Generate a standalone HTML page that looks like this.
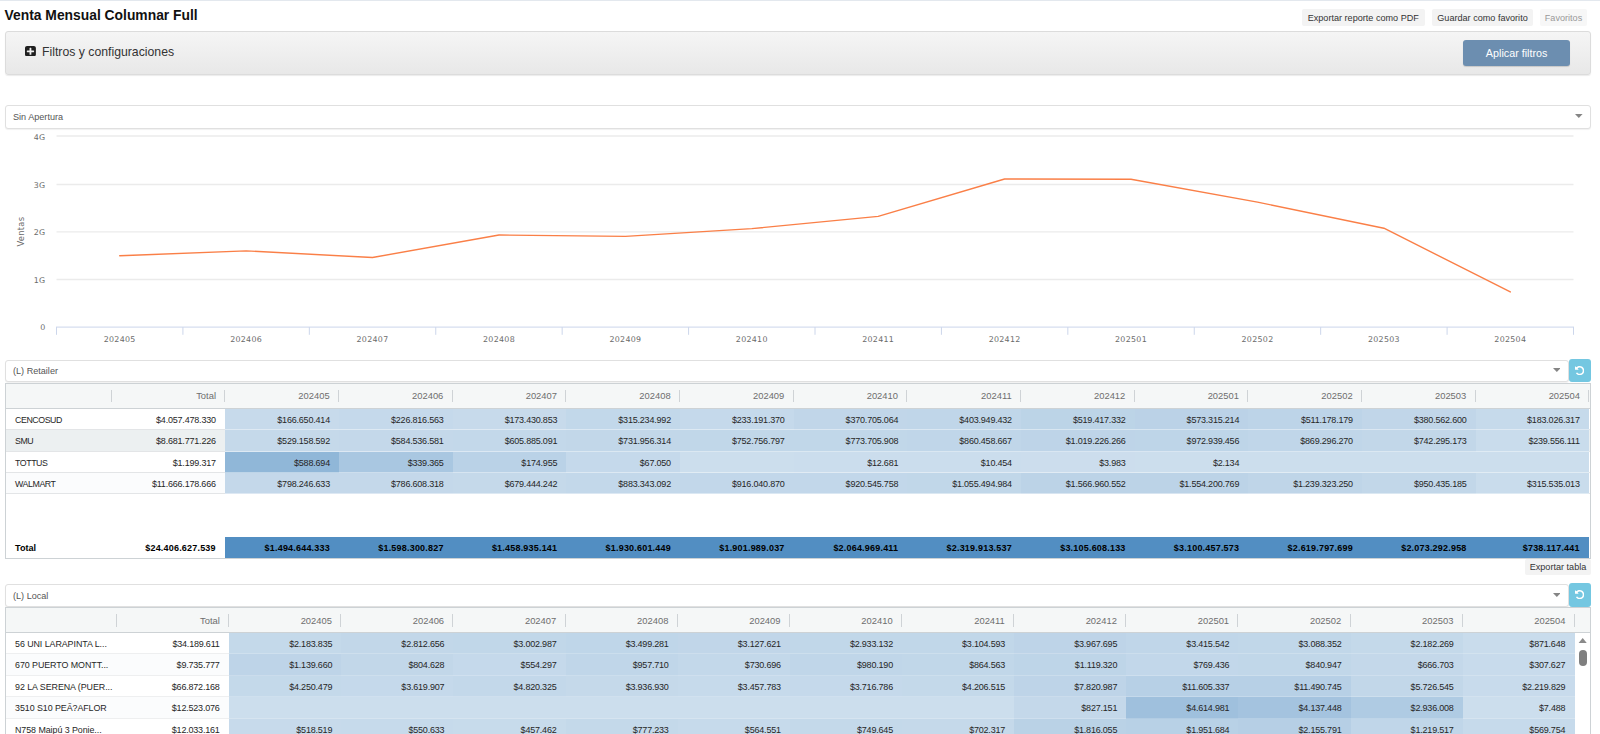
<!DOCTYPE html>
<html lang="es"><head><meta charset="utf-8"><title>Venta Mensual Columnar Full</title>
<style>
html,body{margin:0;padding:0;background:#fff;}
body{width:1600px;height:734px;overflow:hidden;position:relative;font-family:"Liberation Sans",sans-serif;color:#333;}
#topline{position:absolute;left:0;top:0;width:1600px;height:1px;background:#e3e8ee;}
#title{position:absolute;left:4.6px;top:7.2px;font-size:13.85px;font-weight:bold;color:#111;line-height:16px;white-space:nowrap;}
.btn{position:absolute;top:9.4px;height:16.8px;line-height:16.8px;font-size:9.1px;color:#333;background:#f3f3f3;border-radius:2px;text-align:center;white-space:nowrap;}
.btn.dis{color:#999;background:#f7f7f7;}
#b1{left:1302px;width:122.5px;}
#b2{left:1432px;width:101px;}
#b3{left:1540px;width:47px;}
#b4{left:1525px;width:66px;top:559.3px;height:16px;line-height:15.6px;}
#panel{position:absolute;left:4.6px;top:31px;width:1584.6px;height:42px;border:1px solid #dcdcdc;border-radius:3px;background:linear-gradient(#f5f5f5,#e8e8e8);box-shadow:0 1px 1px rgba(0,0,0,.08);}
#plus{position:absolute;left:19.3px;top:13.6px;}
#ftxt{position:absolute;left:36.4px;top:12px;font-size:12.25px;line-height:16px;color:#333;white-space:nowrap;}
#apply{position:absolute;left:1457.4px;top:8px;width:107.3px;height:26px;line-height:26.5px;background:#6c8eb0;border-radius:3px;color:#fff;font-size:10.75px;text-align:center;box-shadow:0 1px 1px rgba(0,0,0,.15);}
.sel{position:absolute;height:21.5px;border:1px solid #e0e0e0;border-radius:3px;background:#fff;box-sizing:border-box;box-shadow:0 1px 1px rgba(0,0,0,.06);}
#s0{height:23.5px;}
.sel span{position:absolute;left:7px;top:0;bottom:0;font-size:9.1px;line-height:21.6px;color:#555;white-space:nowrap;}
#s0 span{line-height:23px;}
.sel .car{position:absolute;right:7.3px;top:50%;margin-top:-2.7px;}
.rbtn{position:absolute;left:1568.5px;width:22.5px;height:23px;border-radius:3px;background:#74c7e1;}
.rbtn svg{position:absolute;left:6.2px;top:6.5px;}
.ct{font-family:"DejaVu Sans","Liberation Sans",sans-serif;font-size:7.9px;letter-spacing:.3px;fill:#6a6a6a;}
.grid{position:absolute;border:1px solid #cdd2d5;box-sizing:border-box;background:#fff;overflow:hidden;font-size:9px;color:#262626;}
.ghdr{position:absolute;left:0;top:0;right:0;background:#f5f7f7;border-bottom:1px solid #cdd2d5;box-sizing:border-box;}
.hc{position:absolute;top:0;bottom:0;box-sizing:border-box;padding-right:9px;text-align:right;color:#6e6e6e;}
.hc span{position:absolute;right:9.3px;top:50%;margin-top:-6px;line-height:12px;}
.hc i{position:absolute;right:0;top:6.5px;bottom:6px;width:1px;background:#cfd3d6;}
.row{position:absolute;left:0;right:0;box-sizing:border-box;border-bottom:1px solid #e3e5e7;background:#fff;}
.row.odd{background:#fbfcfd;}
.row.hov{background:#ecf0f1;}
.c{position:absolute;top:0;bottom:0;box-sizing:border-box;padding:0 9.5px 0 9px;text-align:right;white-space:nowrap;overflow:hidden;display:flex;align-items:center;justify-content:flex-end;}
.row .c{border-bottom:0;}
.c.l{justify-content:flex-start;text-align:left;}
.row.tot{border-bottom:0;font-weight:bold;color:#000;}
.sb{position:absolute;right:0;top:24.8px;bottom:0;width:15px;background:#fff;}
.sbu{position:absolute;left:3px;top:4.4px;}
.sbt{position:absolute;left:3.6px;top:17px;width:8px;height:16px;border-radius:4px;background:#7f7f7f;}

#s2{height:22.3px;}
#s2 span{line-height:22.4px;}
.hc span{font-size:9.4px;margin-top:-5.5px;}
.c{letter-spacing:-0.2px;padding-top:1.4px;}
.c.l{letter-spacing:-0.42px;font-size:8.8px;}
.row.tot .c{letter-spacing:0.2px;}
.row.tot .c.l{letter-spacing:0;font-size:9.1px;}
#g2 .c.l{letter-spacing:-0.06px;font-size:8.9px;}
#g2 .hc i{top:5.8px;bottom:5.4px;}
.ct.v{font-size:8.4px;letter-spacing:.25px;}
#g2 .row{border-bottom-color:#eeeff0;}
.c.h{bottom:-1px;box-shadow:inset 0 -1px 0 rgba(255,255,255,.42);}
#g2 .c.h{box-shadow:inset 0 -1px 0 rgba(255,255,255,.2);}
.row.tot .c.h{bottom:0;box-shadow:none;}
.btn{line-height:18.4px;}
#b4{line-height:16.6px;}
.c.h{padding-top:0.4px;}
.row.tot .c.h,.row.tot .c{padding-top:0.3px;}

</style></head><body>
<div id="topline"></div>
<div id="title">Venta Mensual Columnar Full</div>
<div class="btn" id="b1">Exportar reporte como PDF</div>
<div class="btn" id="b2">Guardar como favorito</div>
<div class="btn dis" id="b3">Favoritos</div>
<div id="panel">
  <svg id="plus" width="10.9" height="10.6" preserveAspectRatio="none" viewBox="0 -1408 1536 1536"><path transform="scale(1,-1)" fill="#1f1f1f" d="M1280 576C1280 541 1251 512 1216 512H896V192C896 157 867 128 832 128H704C669 128 640 157 640 192V512H320C285 512 256 541 256 576V704C256 739 285 768 320 768H640V1088C640 1123 669 1152 704 1152H832C867 1152 896 1123 896 1088V768H1216C1251 768 1280 739 1280 704V576ZM1536 1120C1536 1279 1407 1408 1248 1408H288C129 1408 0 1279 0 1120V160C0 1 129 -128 288 -128H1248C1407 -128 1536 1 1536 160Z"/></svg>
  <span id="ftxt">Filtros y configuraciones</span>
  <div id="apply">Aplicar filtros</div>
</div>
<div class="sel" id="s0" style="left:5px;top:105px;width:1586px"><span>Sin Apertura</span><svg class="car" width="7.6" height="4" viewBox="0 0 7.6 4"><path d="M0 0 H7.6 L3.8 4 Z" fill="#858585"/></svg></div>
<svg id="chart" width="1600" height="230" viewBox="0 130 1600 230" style="position:absolute;left:0;top:130px">
<line x1="56.5" x2="1573.5" y1="279.50" y2="279.50" stroke="#ebebeb" stroke-width="1.4"/>
<line x1="56.5" x2="1573.5" y1="231.90" y2="231.90" stroke="#ebebeb" stroke-width="1.4"/>
<line x1="56.5" x2="1573.5" y1="184.45" y2="184.45" stroke="#ebebeb" stroke-width="1.4"/>
<line x1="56.5" x2="1573.5" y1="136.00" y2="136.00" stroke="#ebebeb" stroke-width="1.4"/>
<line x1="56.0" x2="1574.0" y1="327.1" y2="327.1" stroke="#ccd6eb" stroke-width="1"/>
<line x1="56.50" x2="56.50" y1="327.1" y2="334.8" stroke="#ccd6eb" stroke-width="1"/>
<line x1="182.92" x2="182.92" y1="327.1" y2="334.8" stroke="#ccd6eb" stroke-width="1"/>
<line x1="309.33" x2="309.33" y1="327.1" y2="334.8" stroke="#ccd6eb" stroke-width="1"/>
<line x1="435.75" x2="435.75" y1="327.1" y2="334.8" stroke="#ccd6eb" stroke-width="1"/>
<line x1="562.17" x2="562.17" y1="327.1" y2="334.8" stroke="#ccd6eb" stroke-width="1"/>
<line x1="688.58" x2="688.58" y1="327.1" y2="334.8" stroke="#ccd6eb" stroke-width="1"/>
<line x1="815.00" x2="815.00" y1="327.1" y2="334.8" stroke="#ccd6eb" stroke-width="1"/>
<line x1="941.42" x2="941.42" y1="327.1" y2="334.8" stroke="#ccd6eb" stroke-width="1"/>
<line x1="1067.83" x2="1067.83" y1="327.1" y2="334.8" stroke="#ccd6eb" stroke-width="1"/>
<line x1="1194.25" x2="1194.25" y1="327.1" y2="334.8" stroke="#ccd6eb" stroke-width="1"/>
<line x1="1320.67" x2="1320.67" y1="327.1" y2="334.8" stroke="#ccd6eb" stroke-width="1"/>
<line x1="1447.08" x2="1447.08" y1="327.1" y2="334.8" stroke="#ccd6eb" stroke-width="1"/>
<line x1="1573.50" x2="1573.50" y1="327.1" y2="334.8" stroke="#ccd6eb" stroke-width="1"/>
<text class="ct" x="45.5" y="330.40" text-anchor="end">0</text>
<text class="ct" x="45.5" y="282.80" text-anchor="end">1G</text>
<text class="ct" x="45.5" y="235.20" text-anchor="end">2G</text>
<text class="ct" x="45.5" y="187.75" text-anchor="end">3G</text>
<text class="ct" x="45.5" y="140.05" text-anchor="end">4G</text>
<text class="ct" x="119.7" y="341.9" text-anchor="middle">202405</text>
<text class="ct" x="246.1" y="341.9" text-anchor="middle">202406</text>
<text class="ct" x="372.5" y="341.9" text-anchor="middle">202407</text>
<text class="ct" x="499.0" y="341.9" text-anchor="middle">202408</text>
<text class="ct" x="625.4" y="341.9" text-anchor="middle">202409</text>
<text class="ct" x="751.8" y="341.9" text-anchor="middle">202410</text>
<text class="ct" x="878.2" y="341.9" text-anchor="middle">202411</text>
<text class="ct" x="1004.6" y="341.9" text-anchor="middle">202412</text>
<text class="ct" x="1131.0" y="341.9" text-anchor="middle">202501</text>
<text class="ct" x="1257.5" y="341.9" text-anchor="middle">202502</text>
<text class="ct" x="1383.9" y="341.9" text-anchor="middle">202503</text>
<text class="ct" x="1510.3" y="341.9" text-anchor="middle">202504</text>
<text class="ct v" transform="translate(24.2,231.6) rotate(-90)" text-anchor="middle">Ventas</text>
<polyline points="119.7,255.8 246.1,250.9 372.5,257.5 499.0,235.0 625.4,236.4 751.8,228.6 878.2,216.4 1004.6,179.0 1131.0,179.2 1257.5,202.1 1383.9,228.2 1510.3,291.9" fill="none" stroke="#fa7f47" stroke-width="1.4" stroke-linejoin="round" stroke-linecap="round"/>
</svg>
<div class="sel" id="s1" style="left:5px;top:360px;width:1563.5px"><span>(L) Retailer</span><svg class="car" width="7.6" height="4" viewBox="0 0 7.6 4"><path d="M0 0 H7.6 L3.8 4 Z" fill="#858585"/></svg></div>
<div class="rbtn" style="top:359px"><svg width="9.3" height="9.3" viewBox="0 -1408 1536 1536"><path transform="scale(1,-1)" fill="#fff" d="M1536 640C1536 1063 1191 1408 768 1408C571 1408 380 1329 239 1196L109 1325C91 1344 63 1349 40 1339C16 1329 0 1306 0 1280V832C0 797 29 768 64 768H512C538 768 561 784 571 808C581 831 576 859 557 877L420 1015C513 1102 637 1152 768 1152C1050 1152 1280 922 1280 640C1280 358 1050 128 768 128C609 128 462 200 364 327C359 334 350 338 341 339C332 339 323 336 316 330L179 192C168 181 167 162 177 149C323 -27 539 -128 768 -128C1191 -128 1536 217 1536 640Z"/></svg></div>
<div class="grid" id="g1" style="left:5px;top:382.7px;width:1586px;height:176.3px">
<div class="ghdr" style="height:25.3px">
<div class="hc" style="left:0.00px;width:105.65px"><span></span><i></i></div>
<div class="hc" style="left:105.65px;width:113.66px"><span>Total</span><i></i></div>
<div class="hc" style="left:219.31px;width:113.66px"><span>202405</span><i></i></div>
<div class="hc" style="left:332.97px;width:113.66px"><span>202406</span><i></i></div>
<div class="hc" style="left:446.63px;width:113.66px"><span>202407</span><i></i></div>
<div class="hc" style="left:560.29px;width:113.66px"><span>202408</span><i></i></div>
<div class="hc" style="left:673.95px;width:113.66px"><span>202409</span><i></i></div>
<div class="hc" style="left:787.61px;width:113.66px"><span>202410</span><i></i></div>
<div class="hc" style="left:901.27px;width:113.66px"><span>202411</span><i></i></div>
<div class="hc" style="left:1014.93px;width:113.66px"><span>202412</span><i></i></div>
<div class="hc" style="left:1128.59px;width:113.66px"><span>202501</span><i></i></div>
<div class="hc" style="left:1242.25px;width:113.66px"><span>202502</span><i></i></div>
<div class="hc" style="left:1355.91px;width:113.66px"><span>202503</span><i></i></div>
<div class="hc" style="left:1469.57px;width:113.66px"><span>202504</span><i></i></div>
</div>
<div class="row" style="top:25.30px;height:21.33px">
<div class="c l" style="left:0;width:105.65px">CENCOSUD</div>
<div class="c" style="left:105.65px;width:113.66px">$4.057.478.330</div>
<div class="c h" style="left:219.31px;width:114.16px;background:#c7daeb">$166.650.414</div>
<div class="c h" style="left:332.97px;width:114.16px;background:#c5d9eb">$226.816.563</div>
<div class="c h" style="left:446.63px;width:114.16px;background:#c7daeb">$173.430.853</div>
<div class="c h" style="left:560.29px;width:114.16px;background:#c2d8ea">$315.234.992</div>
<div class="c h" style="left:673.95px;width:114.16px;background:#c5d9eb">$233.191.370</div>
<div class="c h" style="left:787.61px;width:114.16px;background:#c1d6e9">$370.705.064</div>
<div class="c h" style="left:901.27px;width:114.16px;background:#c0d6e9">$403.949.432</div>
<div class="c h" style="left:1014.93px;width:114.16px;background:#bcd4e7">$519.417.332</div>
<div class="c h" style="left:1128.59px;width:114.16px;background:#bbd2e7">$573.315.214</div>
<div class="c h" style="left:1242.25px;width:114.16px;background:#bdd4e8">$511.178.179</div>
<div class="c h" style="left:1355.91px;width:114.16px;background:#c1d6e9">$380.562.600</div>
<div class="c h" style="left:1469.57px;width:113.66px;background:#c6daeb">$183.026.317</div>
</div>
<div class="row odd hov" style="top:46.63px;height:21.33px">
<div class="c l" style="left:0;width:105.65px">SMU</div>
<div class="c" style="left:105.65px;width:113.66px">$8.681.771.226</div>
<div class="c h" style="left:219.31px;width:114.16px;background:#c5d9ea">$529.158.592</div>
<div class="c h" style="left:332.97px;width:114.16px;background:#c4d8ea">$584.536.581</div>
<div class="c h" style="left:446.63px;width:114.16px;background:#c3d8ea">$605.885.091</div>
<div class="c h" style="left:560.29px;width:114.16px;background:#c2d7e9">$731.956.314</div>
<div class="c h" style="left:673.95px;width:114.16px;background:#c1d7e9">$752.756.797</div>
<div class="c h" style="left:787.61px;width:114.16px;background:#c1d7e9">$773.705.908</div>
<div class="c h" style="left:901.27px;width:114.16px;background:#c0d6e9">$860.458.667</div>
<div class="c h" style="left:1014.93px;width:114.16px;background:#bed4e8">$1.019.226.266</div>
<div class="c h" style="left:1128.59px;width:114.16px;background:#bed5e8">$972.939.456</div>
<div class="c h" style="left:1242.25px;width:114.16px;background:#c0d6e9">$869.296.270</div>
<div class="c h" style="left:1355.91px;width:114.16px;background:#c2d7e9">$742.295.173</div>
<div class="c h" style="left:1469.57px;width:113.66px;background:#c9dcec">$239.556.111</div>
</div>
<div class="row" style="top:67.96px;height:21.33px">
<div class="c l" style="left:0;width:105.65px">TOTTUS</div>
<div class="c" style="left:105.65px;width:113.66px">$1.199.317</div>
<div class="c h" style="left:219.31px;width:114.16px;background:#90b7d8">$588.694</div>
<div class="c h" style="left:332.97px;width:114.16px;background:#a9c7e1">$339.365</div>
<div class="c h" style="left:446.63px;width:114.16px;background:#bad2e7">$174.955</div>
<div class="c h" style="left:560.29px;width:114.16px;background:#c5d9eb">$67.050</div>
<div class="c h" style="left:673.95px;width:114.16px;background:#ccdeed"></div>
<div class="c h" style="left:787.61px;width:114.16px;background:#cbdded">$12.681</div>
<div class="c h" style="left:901.27px;width:114.16px;background:#cbdded">$10.454</div>
<div class="c h" style="left:1014.93px;width:114.16px;background:#ccdded">$3.983</div>
<div class="c h" style="left:1128.59px;width:114.16px;background:#ccdeed">$2.134</div>
<div class="c h" style="left:1242.25px;width:114.16px;background:#ccdeed"></div>
<div class="c h" style="left:1355.91px;width:114.16px;background:#ccdeed"></div>
<div class="c h" style="left:1469.57px;width:113.66px;background:#ccdeed"></div>
</div>
<div class="row odd" style="top:89.29px;height:21.33px">
<div class="c l" style="left:0;width:105.65px">WALMART</div>
<div class="c" style="left:105.65px;width:113.66px">$11.666.178.666</div>
<div class="c h" style="left:219.31px;width:114.16px;background:#c4d8ea">$798.246.633</div>
<div class="c h" style="left:332.97px;width:114.16px;background:#c4d8ea">$786.608.318</div>
<div class="c h" style="left:446.63px;width:114.16px;background:#c5d9ea">$679.444.242</div>
<div class="c h" style="left:560.29px;width:114.16px;background:#c3d8ea">$883.343.092</div>
<div class="c h" style="left:673.95px;width:114.16px;background:#c2d7ea">$916.040.870</div>
<div class="c h" style="left:787.61px;width:114.16px;background:#c2d7ea">$920.545.758</div>
<div class="c h" style="left:901.27px;width:114.16px;background:#c1d7e9">$1.055.494.984</div>
<div class="c h" style="left:1014.93px;width:114.16px;background:#bcd3e7">$1.566.960.552</div>
<div class="c h" style="left:1128.59px;width:114.16px;background:#bcd3e7">$1.554.200.769</div>
<div class="c h" style="left:1242.25px;width:114.16px;background:#bfd5e8">$1.239.323.250</div>
<div class="c h" style="left:1355.91px;width:114.16px;background:#c2d7e9">$950.435.185</div>
<div class="c h" style="left:1469.57px;width:113.66px;background:#c9dcec">$315.535.013</div>
</div>
<div class="row tot" style="top:153.40px;height:21.6px">
<div class="c l" style="left:0;width:105.65px">Total</div>
<div class="c" style="left:105.65px;width:113.66px">$24.406.627.539</div>
<div class="c h" style="left:219.31px;width:114.16px;background:#528ec2">$1.494.644.333</div>
<div class="c h" style="left:332.97px;width:114.16px;background:#528ec2">$1.598.300.827</div>
<div class="c h" style="left:446.63px;width:114.16px;background:#528ec2">$1.458.935.141</div>
<div class="c h" style="left:560.29px;width:114.16px;background:#528ec2">$1.930.601.449</div>
<div class="c h" style="left:673.95px;width:114.16px;background:#528ec2">$1.901.989.037</div>
<div class="c h" style="left:787.61px;width:114.16px;background:#528ec2">$2.064.969.411</div>
<div class="c h" style="left:901.27px;width:114.16px;background:#528ec2">$2.319.913.537</div>
<div class="c h" style="left:1014.93px;width:114.16px;background:#528ec2">$3.105.608.133</div>
<div class="c h" style="left:1128.59px;width:114.16px;background:#528ec2">$3.100.457.573</div>
<div class="c h" style="left:1242.25px;width:114.16px;background:#528ec2">$2.619.797.699</div>
<div class="c h" style="left:1355.91px;width:114.16px;background:#528ec2">$2.073.292.958</div>
<div class="c h" style="left:1469.57px;width:113.66px;background:#528ec2">$738.117.441</div>
</div>
</div>
<div class="btn" id="b4">Exportar tabla</div>
<div class="sel" id="s2" style="left:5px;top:584.3px;width:1563.5px"><span>(L) Local</span><svg class="car" width="7.6" height="4" viewBox="0 0 7.6 4"><path d="M0 0 H7.6 L3.8 4 Z" fill="#858585"/></svg></div>
<div class="rbtn" style="top:583.3px;height:23.4px"><svg width="9.3" height="9.3" viewBox="0 -1408 1536 1536"><path transform="scale(1,-1)" fill="#fff" d="M1536 640C1536 1063 1191 1408 768 1408C571 1408 380 1329 239 1196L109 1325C91 1344 63 1349 40 1339C16 1329 0 1306 0 1280V832C0 797 29 768 64 768H512C538 768 561 784 571 808C581 831 576 859 557 877L420 1015C513 1102 637 1152 768 1152C1050 1152 1280 922 1280 640C1280 358 1050 128 768 128C609 128 462 200 364 327C359 334 350 338 341 339C332 339 323 336 316 330L179 192C168 181 167 162 177 149C323 -27 539 -128 768 -128C1191 -128 1536 217 1536 640Z"/></svg></div>
<div class="grid" id="g2" style="left:5px;top:607.4px;width:1586px;height:140px">
<div class="ghdr" style="height:24.6px">
<div class="hc" style="left:0.00px;width:111.00px"><span></span><i></i></div>
<div class="hc" style="left:111.00px;width:112.14px"><span>Total</span><i></i></div>
<div class="hc" style="left:223.14px;width:112.14px"><span>202405</span><i></i></div>
<div class="hc" style="left:335.28px;width:112.14px"><span>202406</span><i></i></div>
<div class="hc" style="left:447.42px;width:112.14px"><span>202407</span><i></i></div>
<div class="hc" style="left:559.56px;width:112.14px"><span>202408</span><i></i></div>
<div class="hc" style="left:671.70px;width:112.14px"><span>202409</span><i></i></div>
<div class="hc" style="left:783.84px;width:112.14px"><span>202410</span><i></i></div>
<div class="hc" style="left:895.98px;width:112.14px"><span>202411</span><i></i></div>
<div class="hc" style="left:1008.12px;width:112.14px"><span>202412</span><i></i></div>
<div class="hc" style="left:1120.26px;width:112.14px"><span>202501</span><i></i></div>
<div class="hc" style="left:1232.40px;width:112.14px"><span>202502</span><i></i></div>
<div class="hc" style="left:1344.54px;width:112.14px"><span>202503</span><i></i></div>
<div class="hc" style="left:1456.68px;width:112.14px"><span>202504</span><i></i></div>
</div>
<div class="row" style="top:24.60px;height:21.45px">
<div class="c l" style="left:0;width:111px">56 UNI LARAPINTA L...</div>
<div class="c" style="left:111.00px;width:112.14px">$34.189.611</div>
<div class="c h" style="left:223.14px;width:112.64px;background:#c4d9ea">$2.183.835</div>
<div class="c h" style="left:335.28px;width:112.64px;background:#c2d7e9">$2.812.656</div>
<div class="c h" style="left:447.42px;width:112.64px;background:#c1d7e9">$3.002.987</div>
<div class="c h" style="left:559.56px;width:112.64px;background:#bfd6e9">$3.499.281</div>
<div class="c h" style="left:671.70px;width:112.64px;background:#c1d6e9">$3.127.621</div>
<div class="c h" style="left:783.84px;width:112.64px;background:#c1d7e9">$2.933.132</div>
<div class="c h" style="left:895.98px;width:112.64px;background:#c1d7e9">$3.104.593</div>
<div class="c h" style="left:1008.12px;width:112.64px;background:#bed4e8">$3.967.695</div>
<div class="c h" style="left:1120.26px;width:112.64px;background:#c0d6e9">$3.415.542</div>
<div class="c h" style="left:1232.40px;width:112.64px;background:#c1d7e9">$3.088.352</div>
<div class="c h" style="left:1344.54px;width:112.64px;background:#c4d9ea">$2.182.269</div>
<div class="c h" style="left:1456.68px;width:112.14px;background:#c9dcec">$871.648</div>
</div>
<div class="row odd" style="top:46.05px;height:21.45px">
<div class="c l" style="left:0;width:111px">670 PUERTO MONTT...</div>
<div class="c" style="left:111.00px;width:112.14px">$9.735.777</div>
<div class="c h" style="left:223.14px;width:112.64px;background:#bed4e8">$1.139.660</div>
<div class="c h" style="left:335.28px;width:112.64px;background:#c2d7e9">$804.628</div>
<div class="c h" style="left:447.42px;width:112.64px;background:#c5d9eb">$554.297</div>
<div class="c h" style="left:559.56px;width:112.64px;background:#c0d6e9">$957.710</div>
<div class="c h" style="left:671.70px;width:112.64px;background:#c3d8ea">$730.696</div>
<div class="c h" style="left:783.84px;width:112.64px;background:#c0d6e9">$980.190</div>
<div class="c h" style="left:895.98px;width:112.64px;background:#c1d7e9">$864.563</div>
<div class="c h" style="left:1008.12px;width:112.64px;background:#bed5e8">$1.119.320</div>
<div class="c h" style="left:1120.26px;width:112.64px;background:#c2d7ea">$769.436</div>
<div class="c h" style="left:1232.40px;width:112.64px;background:#c1d7e9">$840.947</div>
<div class="c h" style="left:1344.54px;width:112.64px;background:#c4d8ea">$666.703</div>
<div class="c h" style="left:1456.68px;width:112.14px;background:#c8dbec">$307.627</div>
</div>
<div class="row" style="top:67.50px;height:21.45px">
<div class="c l" style="left:0;width:111px">92 LA SERENA (PUER...</div>
<div class="c" style="left:111.00px;width:112.14px">$66.872.168</div>
<div class="c h" style="left:223.14px;width:112.64px;background:#c4d9ea">$4.250.479</div>
<div class="c h" style="left:335.28px;width:112.64px;background:#c5d9eb">$3.619.907</div>
<div class="c h" style="left:447.42px;width:112.64px;background:#c3d8ea">$4.820.325</div>
<div class="c h" style="left:559.56px;width:112.64px;background:#c5d9ea">$3.936.930</div>
<div class="c h" style="left:671.70px;width:112.64px;background:#c6daeb">$3.457.783</div>
<div class="c h" style="left:783.84px;width:112.64px;background:#c5d9eb">$3.716.786</div>
<div class="c h" style="left:895.98px;width:112.64px;background:#c4d9ea">$4.206.515</div>
<div class="c h" style="left:1008.12px;width:112.64px;background:#bed4e8">$7.820.987</div>
<div class="c h" style="left:1120.26px;width:112.64px;background:#b7d0e6">$11.605.337</div>
<div class="c h" style="left:1232.40px;width:112.64px;background:#b7d0e6">$11.490.745</div>
<div class="c h" style="left:1344.54px;width:112.64px;background:#c2d7e9">$5.726.545</div>
<div class="c h" style="left:1456.68px;width:112.14px;background:#c8dbec">$2.219.829</div>
</div>
<div class="row odd" style="top:88.95px;height:21.45px">
<div class="c l" style="left:0;width:111px">3510 S10 PEÃ?AFLOR</div>
<div class="c" style="left:111.00px;width:112.14px">$12.523.076</div>
<div class="c h" style="left:223.14px;width:112.64px;background:#ccdeed"></div>
<div class="c h" style="left:335.28px;width:112.64px;background:#ccdeed"></div>
<div class="c h" style="left:447.42px;width:112.64px;background:#ccdeed"></div>
<div class="c h" style="left:559.56px;width:112.64px;background:#ccdeed"></div>
<div class="c h" style="left:671.70px;width:112.64px;background:#ccdeed"></div>
<div class="c h" style="left:783.84px;width:112.64px;background:#ccdeed"></div>
<div class="c h" style="left:895.98px;width:112.64px;background:#ccdeed"></div>
<div class="c h" style="left:1008.12px;width:112.64px;background:#c4d8ea">$827.151</div>
<div class="c h" style="left:1120.26px;width:112.64px;background:#9fc0dd">$4.614.981</div>
<div class="c h" style="left:1232.40px;width:112.64px;background:#a4c3df">$4.137.448</div>
<div class="c h" style="left:1344.54px;width:112.64px;background:#afcbe3">$2.936.008</div>
<div class="c h" style="left:1456.68px;width:112.14px;background:#ccdeed">$7.488</div>
</div>
<div class="row" style="top:110.40px;height:21.45px">
<div class="c l" style="left:0;width:111px">N758 Maipú 3 Ponie...</div>
<div class="c" style="left:111.00px;width:112.14px">$12.033.161</div>
<div class="c h" style="left:223.14px;width:112.64px;background:#c7daeb">$518.519</div>
<div class="c h" style="left:335.28px;width:112.64px;background:#c6daeb">$550.633</div>
<div class="c h" style="left:447.42px;width:112.64px;background:#c7dbeb">$457.462</div>
<div class="c h" style="left:559.56px;width:112.64px;background:#c4d9ea">$777.233</div>
<div class="c h" style="left:671.70px;width:112.64px;background:#c6daeb">$564.551</div>
<div class="c h" style="left:783.84px;width:112.64px;background:#c4d9ea">$749.645</div>
<div class="c h" style="left:895.98px;width:112.64px;background:#c5d9ea">$702.317</div>
<div class="c h" style="left:1008.12px;width:112.64px;background:#bad2e6">$1.816.055</div>
<div class="c h" style="left:1120.26px;width:112.64px;background:#b8d1e6">$1.951.684</div>
<div class="c h" style="left:1232.40px;width:112.64px;background:#b6cfe5">$2.155.791</div>
<div class="c h" style="left:1344.54px;width:112.64px;background:#c0d6e9">$1.219.517</div>
<div class="c h" style="left:1456.68px;width:112.14px;background:#c6daeb">$569.754</div>
</div>
<div class="sb"><svg class="sbu" width="9.4" height="5.8" viewBox="0 0 10 6" preserveAspectRatio="none"><path d="M0 6 L5 0 L10 6 Z" fill="#8a8a8a"/></svg><div class="sbt"></div></div>
</div>
</body></html>
